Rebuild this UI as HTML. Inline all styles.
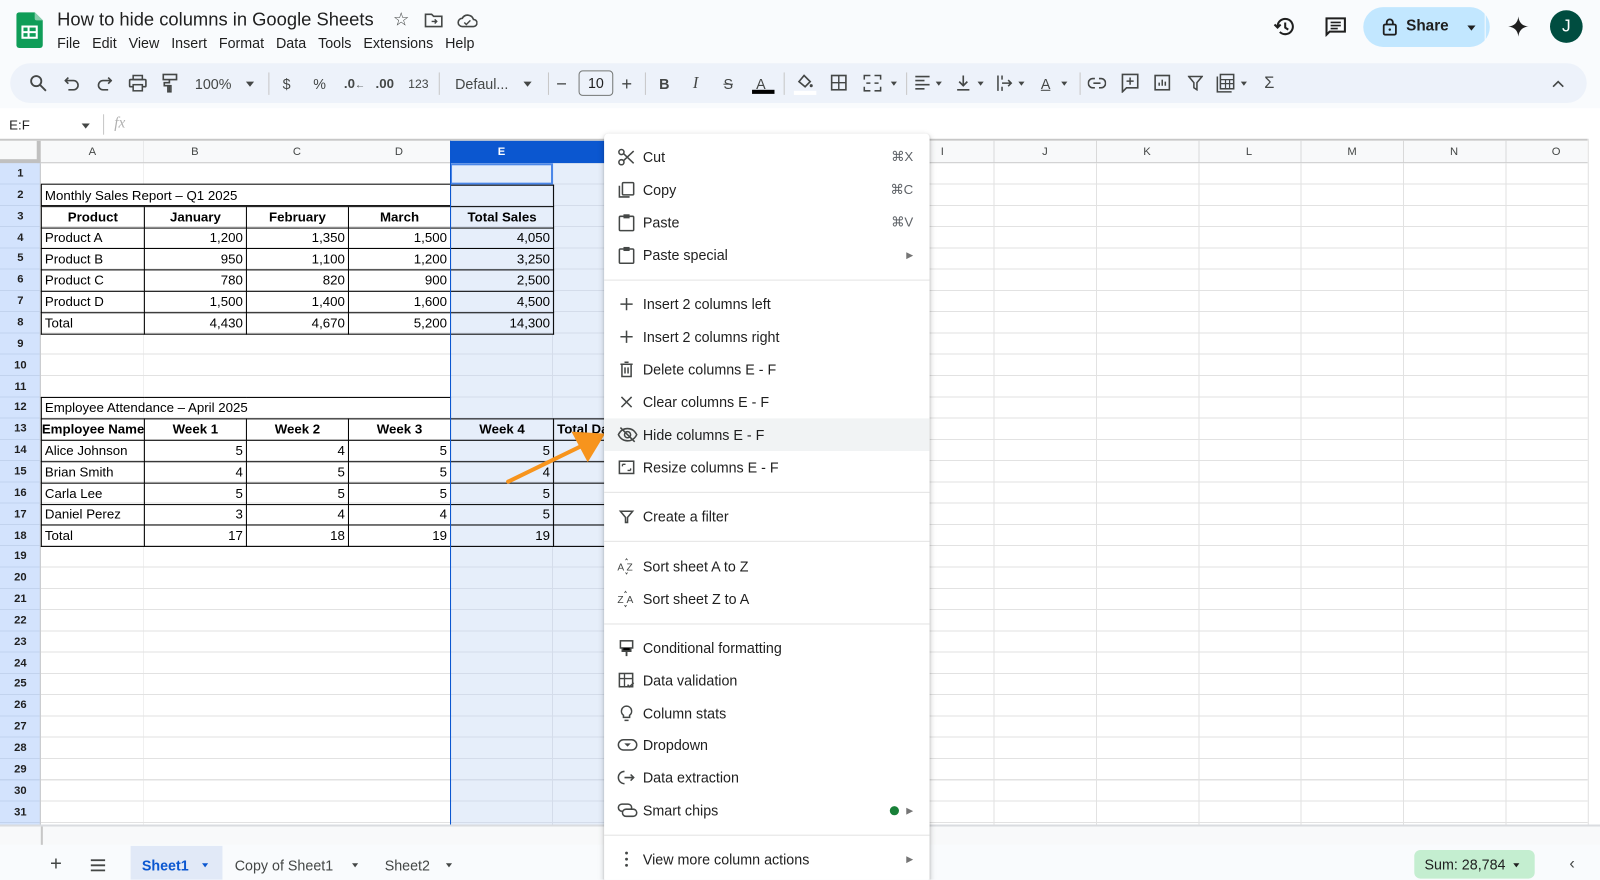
<!DOCTYPE html>
<html><head><meta charset="utf-8">
<style>
*{box-sizing:border-box;margin:0;padding:0}
html,body{width:1600px;height:879px;overflow:hidden;background:#f9fbfd}
#w{position:absolute;left:0;top:0;width:1568px;height:862px;transform:scale(1.020408);transform-origin:0 0;font-family:"Liberation Sans",Arial,sans-serif;color:#1f1f1f;overflow:hidden}
.a{position:absolute}
.tb{position:absolute;top:72px;font-size:14px;color:#444746;line-height:20px}
.sep{position:absolute;top:71px;width:1px;height:22px;background:#c7c7c7}
.ch{position:absolute;top:138px;height:22px;font-size:11px;color:#444746;text-align:center;line-height:22px}
.rh{position:absolute;left:0;width:40px;font-size:11px;font-weight:bold;color:#1f1f1f;text-align:center;line-height:20px}
table.d{position:absolute;border-collapse:collapse;table-layout:fixed;font-size:13px;color:#000}
table.d td{border:1px solid #000;height:20.85px;padding:0 3px;white-space:nowrap;overflow:hidden;line-height:18px}
td.r{text-align:right}td.b{font-weight:bold;text-align:center}
.mi{position:absolute;left:592px;width:319px;height:32px;font-size:14px;color:#1f1f1f;line-height:32px}
.mi span.t{position:absolute;left:38px}
.mi svg{position:absolute;left:13px;top:7px}
.mi .k{position:absolute;right:16px;color:#5f6368;font-size:13px}
.mi .ar{position:absolute;right:16px;font-size:9px;color:#757575}
.ms{position:absolute;left:592px;width:319px;height:1px;background:#e3e3e3}
</style></head><body><div id="w">

<svg class="a" style="left:16px;top:12px" width="26" height="35" viewBox="0 0 26 35"><path d="M0 3a3 3 0 0 1 3-3h15l8 8v24a3 3 0 0 1-3 3H3a3 3 0 0 1-3-3z" fill="#0f9d58"/><path d="M18 0l8 8h-6a2 2 0 0 1-2-2z" fill="#87ceac"/><rect x="6" y="14" width="14" height="11" fill="none" stroke="#fff" stroke-width="2"/><path d="M6 19.5h14M12 14v11" stroke="#fff" stroke-width="2"/></svg>
<div class="a" style="left:56px;top:9px;font-size:18px;color:#1f1f1f">How to hide columns in Google Sheets</div>
<div class="a" style="left:385px;top:9px;font-size:18px;color:#444746">☆</div>
<svg class="a" style="left:416px;top:12px" width="18" height="16" viewBox="0 0 18 16"><path d="M1 2h6l2 2h8v10H1z" fill="none" stroke="#444746" stroke-width="1.6"/><path d="M7 9h5M10 7l2 2-2 2" fill="none" stroke="#444746" stroke-width="1.4"/></svg>
<svg class="a" style="left:448px;top:12px" width="20" height="16" viewBox="0 0 20 16"><path d="M5 14a4 4 0 0 1 0-8 6 6 0 0 1 11 1 3.5 3.5 0 0 1 0 7z" fill="none" stroke="#444746" stroke-width="1.6"/><path d="M7 10l2 2 4-4" fill="none" stroke="#444746" stroke-width="1.4"/></svg>
<div class="a" style="left:56px;top:34px;font-size:14px;color:#1f1f1f">File&nbsp;&nbsp;&nbsp;Edit&nbsp;&nbsp;&nbsp;View&nbsp;&nbsp;&nbsp;Insert&nbsp;&nbsp;&nbsp;Format&nbsp;&nbsp;&nbsp;Data&nbsp;&nbsp;&nbsp;Tools&nbsp;&nbsp;&nbsp;Extensions&nbsp;&nbsp;&nbsp;Help</div>

<svg class="a" style="left:1248px;top:15px" width="22" height="22" viewBox="0 0 22 22"><path d="M4 11a7.5 7.5 0 1 1 2.2 5.3" fill="none" stroke="#1f1f1f" stroke-width="2"/><path d="M1 9l3 3 3-3" fill="none" stroke="#1f1f1f" stroke-width="2"/><path d="M11.5 7v5l3 2" fill="none" stroke="#1f1f1f" stroke-width="2"/></svg>
<svg class="a" style="left:1298px;top:16px" width="22" height="20" viewBox="0 0 22 20"><path d="M2 2h18v13H5l-3 3z" fill="none" stroke="#1f1f1f" stroke-width="2"/><path d="M6 6h10M6 9h10M6 12h7" stroke="#1f1f1f" stroke-width="1.6"/></svg>
<div class="a" style="left:1336px;top:7px;width:124px;height:39px;border-radius:20px;background:#c2e7ff"></div>
<div class="a" style="left:1455px;top:7px;width:1px;height:39px;background:#f9fbfd;left:1455px"></div>
<svg class="a" style="left:1355px;top:17px" width="14" height="18" viewBox="0 0 14 18"><rect x="1" y="7" width="12" height="10" rx="1.5" fill="none" stroke="#1f1f1f" stroke-width="1.8"/><path d="M4 7V5a3 3 0 0 1 6 0v2" fill="none" stroke="#1f1f1f" stroke-width="1.8"/><circle cx="7" cy="12" r="1.2" fill="#1f1f1f"/></svg>
<div class="a" style="left:1378px;top:17px;font-size:15px;font-weight:bold;color:#1f1f1f">Share</div>
<div class="a" style="left:1438px;top:25px;border:4px solid transparent;border-top:5px solid #1f1f1f"></div>
<svg class="a" style="left:1478px;top:16px" width="20" height="20" viewBox="0 0 20 20"><path d="M10 0C10.5 6 14 9.5 20 10 14 10.5 10.5 14 10 20 9.5 14 6 10.5 0 10 6 9.5 9.5 6 10 0z" fill="#1f1f1f"/></svg>
<div class="a" style="left:1519px;top:10px;width:32px;height:32px;border-radius:50%;background:#004d40;color:#fff;font-size:17px;text-align:center;line-height:32px">J</div>

<div class="a" style="left:10px;top:62px;width:1545px;height:39px;border-radius:20px;background:#edf2fa"></div>
<svg class="a" style="left:29px;top:73px" width="17" height="17" viewBox="0 0 17 17"><circle cx="6.5" cy="6.5" r="5" fill="none" stroke="#444746" stroke-width="1.8"/><path d="M10 10l6 6" stroke="#444746" stroke-width="1.8"/></svg>
<svg class="a" style="left:63px;top:75px" width="15" height="14" viewBox="0 0 15 14"><path d="M4 1L1 4l3 3" fill="none" stroke="#444746" stroke-width="1.6"/><path d="M1 4h8a4.5 4.5 0 0 1 0 9H4" fill="none" stroke="#444746" stroke-width="1.6"/></svg>
<svg class="a" style="left:95px;top:75px" width="15" height="14" viewBox="0 0 15 14"><path d="M11 1l3 3-3 3" fill="none" stroke="#444746" stroke-width="1.6"/><path d="M14 4H6a4.5 4.5 0 0 0 0 9h5" fill="none" stroke="#444746" stroke-width="1.6"/></svg>
<svg class="a" style="left:126px;top:73px" width="18" height="17" viewBox="0 0 18 17"><rect x="1" y="5" width="16" height="7" rx="1" fill="none" stroke="#444746" stroke-width="1.6"/><rect x="4.5" y="1" width="9" height="4" fill="none" stroke="#444746" stroke-width="1.5"/><rect x="4.5" y="10" width="9" height="6" fill="#edf2fa" stroke="#444746" stroke-width="1.5"/></svg>
<svg class="a" style="left:159px;top:72px" width="15" height="19" viewBox="0 0 15 19"><rect x="1" y="1" width="13" height="5" fill="none" stroke="#444746" stroke-width="1.6"/><path d="M7 6v3H2v3h5v6" fill="none" stroke="#444746" stroke-width="1.6"/><rect x="5.5" y="12" width="3" height="6" fill="none" stroke="#444746" stroke-width="1.5"/></svg>
<div class="tb" style="left:191px">100%</div>
<div class="a" style="left:241px;top:80px;border:4px solid transparent;border-top:5px solid #444746"></div>
<div class="sep" style="left:263px"></div>
<div class="tb" style="left:277px">$</div>
<div class="tb" style="left:307px">%</div>
<div class="tb" style="left:337px;font-size:13px;font-weight:bold">.0<span style="font-size:10px">←</span></div>
<div class="tb" style="left:368px;font-size:13px;font-weight:bold">.00</div>
<div class="tb" style="left:400px;font-size:12px">123</div>
<div class="sep" style="left:430px"></div>
<div class="tb" style="left:446px">Defaul...</div>
<div class="a" style="left:513px;top:80px;border:4px solid transparent;border-top:5px solid #444746"></div>
<div class="sep" style="left:537px"></div>
<div class="tb" style="left:545px;font-size:18px">−</div>
<div class="a" style="left:567px;top:69px;width:34px;height:25px;border:1px solid #747775;border-radius:4px;font-size:14px;text-align:center;line-height:23px;color:#1f1f1f">10</div>
<div class="tb" style="left:609px;font-size:18px">+</div>
<div class="sep" style="left:632px"></div>
<div class="tb" style="left:646px;font-weight:bold">B</div>
<div class="tb" style="left:679px;font-style:italic;font-family:'Liberation Serif',serif;font-size:16px">I</div>
<div class="tb" style="left:709px;text-decoration:line-through">S</div>
<div class="tb" style="left:741px">A</div><div class="a" style="left:737px;top:88px;width:22px;height:4px;background:#000"></div>
<div class="sep" style="left:768px"></div>
<svg class="a" style="left:779px;top:71px" width="20" height="20" viewBox="0 0 20 20"><path d="M4 9l5-6 6 6-5 5z" fill="none" stroke="#444746" stroke-width="1.6"/><circle cx="16" cy="13" r="1.5" fill="#444746"/></svg>
<div class="a" style="left:778px;top:89px;width:22px;height:4px;background:#fff"></div>
<svg class="a" style="left:814px;top:73px" width="16" height="16" viewBox="0 0 16 16"><rect x="1" y="1" width="14" height="14" fill="none" stroke="#444746" stroke-width="1.6"/><path d="M8 1v14M1 8h14" stroke="#444746" stroke-width="1.4"/></svg>
<svg class="a" style="left:846px;top:73px" width="18" height="17" viewBox="0 0 18 17"><path d="M1 5V1h6M11 1h6v4M1 12v4h6M11 16h6v-4M3 8.5h4M11 8.5h4" fill="none" stroke="#444746" stroke-width="1.5"/></svg>
<div class="a" style="left:873px;top:80px;border:3.5px solid transparent;border-top:4.5px solid #444746"></div>
<div class="sep" style="left:888px"></div>
<svg class="a" style="left:896px;top:74px" width="16" height="15" viewBox="0 0 16 15"><path d="M1 1h14M1 5h9M1 9h14M1 13h9" stroke="#444746" stroke-width="1.6"/></svg>
<div class="a" style="left:917px;top:80px;border:3.5px solid transparent;border-top:4.5px solid #444746"></div>
<svg class="a" style="left:937px;top:73px" width="14" height="17" viewBox="0 0 14 17"><path d="M7 1v10M3 7l4 4 4-4M1 15h12" fill="none" stroke="#444746" stroke-width="1.6"/></svg>
<div class="a" style="left:958px;top:80px;border:3.5px solid transparent;border-top:4.5px solid #444746"></div>
<svg class="a" style="left:977px;top:73px" width="16" height="17" viewBox="0 0 16 17"><path d="M1 1v15M5 8.5h9M11 5.5l3 3-3 3M5 1v4M5 12v4" fill="none" stroke="#444746" stroke-width="1.5"/></svg>
<div class="a" style="left:998px;top:80px;border:3.5px solid transparent;border-top:4.5px solid #444746"></div>
<div class="tb" style="left:1020px;text-decoration:underline">A</div>
<div class="a" style="left:1040px;top:80px;border:3.5px solid transparent;border-top:4.5px solid #444746"></div>
<div class="sep" style="left:1058px"></div>
<svg class="a" style="left:1066px;top:76px" width="18" height="11" viewBox="0 0 18 11"><path d="M7 1H5a4.5 4.5 0 0 0 0 9h2M11 1h2a4.5 4.5 0 0 1 0 9h-2M5.5 5.5h7" fill="none" stroke="#444746" stroke-width="1.6"/></svg>
<svg class="a" style="left:1099px;top:72px" width="17" height="19" viewBox="0 0 17 19"><path d="M1 1h15v13H5l-4 4z" fill="none" stroke="#444746" stroke-width="1.6"/><path d="M8.5 4v7M5 7.5h7" stroke="#444746" stroke-width="1.5"/></svg>
<svg class="a" style="left:1131px;top:73px" width="16" height="16" viewBox="0 0 16 16"><rect x="1" y="1" width="14" height="14" fill="none" stroke="#444746" stroke-width="1.6"/><path d="M5 11V8M8 11V5M11 11V7" stroke="#444746" stroke-width="1.5"/></svg>
<svg class="a" style="left:1164px;top:74px" width="15" height="15" viewBox="0 0 15 15"><path d="M1 1h13L9 7v7l-3-2V7z" fill="none" stroke="#444746" stroke-width="1.5"/></svg>
<svg class="a" style="left:1192px;top:72px" width="18" height="19" viewBox="0 0 18 19"><path d="M1 3v15h14" fill="none" stroke="#444746" stroke-width="1.5"/><rect x="4" y="1" width="13" height="14" fill="none" stroke="#444746" stroke-width="1.5"/><path d="M4 6h13M4 10h13M9 6v9M13 6v9" stroke="#444746" stroke-width="1.2"/></svg>
<div class="a" style="left:1216px;top:80px;border:3.5px solid transparent;border-top:4.5px solid #444746"></div>
<div class="tb" style="left:1239px;font-size:16px">Σ</div>
<svg class="a" style="left:1521px;top:78px" width="12" height="8" viewBox="0 0 12 8"><path d="M1 7l5-5 5 5" fill="none" stroke="#444746" stroke-width="1.6"/></svg>

<div class="a" style="left:0;top:106px;width:1600px;height:32px;background:#fff"></div>
<div class="a" style="left:9px;top:115px;font-size:13px;color:#1f1f1f">E:F</div>
<div class="a" style="left:80px;top:121px;border:4px solid transparent;border-top:5px solid #444746"></div>
<div class="a" style="left:101px;top:112px;width:1px;height:20px;background:#c7c7c7"></div>
<div class="a" style="left:112px;top:113px;font-size:15px;font-style:italic;color:#b0b0b0;font-family:'Liberation Serif',serif">fx</div>

<div class="a" style="left:0;top:136px;width:1556px;height:672px;background:#fff"></div>
<div class="a" style="left:0;top:136px;width:1556px;height:2px;background:#c7c7c7"></div>
<div class="a" style="left:0;top:138px;width:40px;height:22px;background:#f8f9fa;border-right:4px solid #c0c0c0;border-bottom:4px solid #c0c0c0"></div>
<div class="a" style="left:40px;top:138px;width:1516px;height:22px;background:#f8f9fa repeating-linear-gradient(90deg,transparent 0,transparent 100px,#d9d9d9 100px,#d9d9d9 100.4px);border-bottom:1px solid #c7c7c7"></div>
<div class="a" style="left:441px;top:138px;width:201px;height:22px;background:#0b57d0"></div>
<div class="a" style="left:911px;top:138px;width:645px;height:22px;background:#f8f9fa repeating-linear-gradient(90deg,transparent 0,transparent 62.5px,#d9d9d9 62.5px,#d9d9d9 63.5px,transparent 63.5px,transparent 100.4px);border-bottom:1px solid #c7c7c7"></div>
<div class="ch" style="left:40px;width:101px">A</div>
<div class="ch" style="left:141px;width:100px">B</div>
<div class="ch" style="left:241px;width:100px">C</div>
<div class="ch" style="left:341px;width:100px">D</div>
<div class="ch" style="left:441px;width:101px;color:#fff;font-weight:bold">E</div>
<div class="ch" style="left:873px;width:101px">I</div>
<div class="ch" style="left:974px;width:100px">J</div>
<div class="ch" style="left:1074px;width:100px">K</div>
<div class="ch" style="left:1174px;width:100px">L</div>
<div class="ch" style="left:1275px;width:100px">M</div>
<div class="ch" style="left:1375px;width:100px">N</div>
<div class="ch" style="left:1475px;width:100px">O</div>

<div class="a" style="left:40px;top:160px;width:1516px;height:648px;background-image:repeating-linear-gradient(180deg,transparent 0,transparent 19.85px,#e2e2e2 19.85px,#e2e2e2 20.85px),repeating-linear-gradient(90deg,transparent 0,transparent 100px,#e2e2e2 100px,#e2e2e2 100.4px)"></div>
<div class="a" style="left:441px;top:160px;width:201px;height:648px;background-color:rgba(11,87,208,0.1);background-image:repeating-linear-gradient(180deg,transparent 0,transparent 19.85px,#d4dcea 19.85px,#d4dcea 20.85px),linear-gradient(90deg,transparent 100px,#d4dcea 100px,#d4dcea 101px,transparent 101px)"></div>
<div class="a" style="left:441px;top:138px;width:1px;height:670px;background:#0b57d0"></div>
<div class="a" style="left:441px;top:160px;width:101px;height:21px;border:2px solid #4a86e8"></div>
<div class="a" style="left:911px;top:160px;width:645px;height:648px;background:#fff;background-image:repeating-linear-gradient(180deg,transparent 0,transparent 19.85px,#e2e2e2 19.85px,#e2e2e2 20.85px),repeating-linear-gradient(90deg,transparent 0,transparent 62.5px,#e2e2e2 62.5px,#e2e2e2 63.5px,transparent 63.5px,transparent 100.4px)"></div>
<div class="a" style="left:0;top:160px;width:40px;height:648px;background:#d3e3fd repeating-linear-gradient(180deg,transparent 0,transparent 19.85px,#c2d3ee 19.85px,#c2d3ee 20.85px);border-right:1px solid #c7c7c7"></div>
<div class="rh" style="top:160.0px">1</div><div class="rh" style="top:180.9px">2</div><div class="rh" style="top:201.7px">3</div><div class="rh" style="top:222.6px">4</div><div class="rh" style="top:243.4px">5</div><div class="rh" style="top:264.3px">6</div><div class="rh" style="top:285.1px">7</div><div class="rh" style="top:306.0px">8</div><div class="rh" style="top:326.8px">9</div><div class="rh" style="top:347.7px">10</div><div class="rh" style="top:368.5px">11</div><div class="rh" style="top:389.4px">12</div><div class="rh" style="top:410.2px">13</div><div class="rh" style="top:431.1px">14</div><div class="rh" style="top:451.9px">15</div><div class="rh" style="top:472.8px">16</div><div class="rh" style="top:493.6px">17</div><div class="rh" style="top:514.5px">18</div><div class="rh" style="top:535.3px">19</div><div class="rh" style="top:556.2px">20</div><div class="rh" style="top:577.0px">21</div><div class="rh" style="top:597.9px">22</div><div class="rh" style="top:618.7px">23</div><div class="rh" style="top:639.6px">24</div><div class="rh" style="top:660.4px">25</div><div class="rh" style="top:681.3px">26</div><div class="rh" style="top:702.1px">27</div><div class="rh" style="top:723.0px">28</div><div class="rh" style="top:743.8px">29</div><div class="rh" style="top:764.7px">30</div><div class="rh" style="top:785.5px">31</div>

<table class="d" style="left:40px;top:180.85px;width:502px">
<colgroup><col style="width:101px"><col style="width:100px"><col style="width:100px"><col style="width:100px"><col style="width:101px"></colgroup>
<tr><td colspan="4">Monthly Sales Report – Q1 2025</td><td style="background:transparent"></td></tr>
<tr><td class="b">Product</td><td class="b">January</td><td class="b">February</td><td class="b">March</td><td class="b">Total Sales</td></tr>
<tr><td>Product A</td><td class="r">1,200</td><td class="r">1,350</td><td class="r">1,500</td><td class="r">4,050</td></tr>
<tr><td>Product B</td><td class="r">950</td><td class="r">1,100</td><td class="r">1,200</td><td class="r">3,250</td></tr>
<tr><td>Product C</td><td class="r">780</td><td class="r">820</td><td class="r">900</td><td class="r">2,500</td></tr>
<tr><td>Product D</td><td class="r">1,500</td><td class="r">1,400</td><td class="r">1,600</td><td class="r">4,500</td></tr>
<tr><td>Total</td><td class="r">4,430</td><td class="r">4,670</td><td class="r">5,200</td><td class="r">14,300</td></tr>
</table>
<div class="a" style="left:40px;top:180px;width:402px;height:22px;background:#fff;border:1px solid #000;font-size:13px;padding:2px 3px;color:#000;line-height:18px">Monthly Sales Report – Q1 2025</div>

<table class="d" style="left:40px;top:389.35px;width:602px">
<colgroup><col style="width:101px"><col style="width:100px"><col style="width:100px"><col style="width:100px"><col style="width:101px"><col style="width:100px"></colgroup>
<tr><td colspan="4">Employee Attendance – April 2025</td><td style="border:none"></td><td style="border:none"></td></tr>
<tr><td style="font-weight:bold;padding:0">Employee Name</td><td class="b">Week 1</td><td class="b">Week 2</td><td class="b">Week 3</td><td class="b">Week 4</td><td class="b" style="text-align:left">Total Days</td></tr>
<tr><td>Alice Johnson</td><td class="r">5</td><td class="r">4</td><td class="r">5</td><td class="r">5</td><td></td></tr>
<tr><td>Brian Smith</td><td class="r">4</td><td class="r">5</td><td class="r">5</td><td class="r">4</td><td></td></tr>
<tr><td>Carla Lee</td><td class="r">5</td><td class="r">5</td><td class="r">5</td><td class="r">5</td><td></td></tr>
<tr><td>Daniel Perez</td><td class="r">3</td><td class="r">4</td><td class="r">4</td><td class="r">5</td><td></td></tr>
<tr><td>Total</td><td class="r">17</td><td class="r">18</td><td class="r">19</td><td class="r">19</td><td></td></tr>
</table>
<div class="a" style="left:441px;top:160px;width:1px;height:648px;background:#0b57d0"></div>

<svg class="a" style="left:490px;top:415px" width="110" height="65" viewBox="0 0 110 65"><path d="M8 57L80 22" stroke="#f7941d" stroke-width="4" stroke-linecap="round"/><path d="M103 10L70 8 86 38z" fill="#f7941d"/></svg>

<div class="a" style="left:1556px;top:136px;width:12px;height:690px;background:#fff;border-left:1px solid #e0e0e0"></div>
<div class="a" style="left:0;top:808px;width:1568px;height:20px;background:#f8f9fa;border-top:2px solid #dadce0"></div>
<div class="a" style="left:40px;top:810px;width:2px;height:18px;background:#c7c7c7"></div>
<div class="a" style="left:0;top:828px;width:1600px;height:51px;background:#f9fbfd"></div>
<div class="a" style="left:49px;top:836px;font-size:20px;color:#444746">+</div>
<svg class="a" style="left:88px;top:842px" width="16" height="12" viewBox="0 0 16 12"><path d="M1 1h14M1 6h14M1 11h14" stroke="#444746" stroke-width="1.8"/></svg>
<div class="a" style="left:128px;top:829px;width:90px;height:50px;background:#e1e9f7"></div>
<div class="a" style="left:139px;top:840px;font-size:14px;color:#0b57d0;font-weight:bold">Sheet1</div>
<div class="a" style="left:198px;top:846px;border:3.5px solid transparent;border-top:4.5px solid #0b57d0"></div>
<div class="a" style="left:230px;top:840px;font-size:14px;color:#444746">Copy of Sheet1</div>
<div class="a" style="left:345px;top:846px;border:3.5px solid transparent;border-top:4.5px solid #444746"></div>
<div class="a" style="left:377px;top:840px;font-size:14px;color:#444746">Sheet2</div>
<div class="a" style="left:437px;top:846px;border:3.5px solid transparent;border-top:4.5px solid #444746"></div>
<div class="a" style="left:1386px;top:833px;width:118px;height:28px;border-radius:6px;background:#c4eed0"></div>
<div class="a" style="left:1396px;top:839px;font-size:14px;color:#1f1f1f">Sum: 28,784</div>
<div class="a" style="left:1483px;top:846px;border:3.5px solid transparent;border-top:4.5px solid #1f1f1f"></div>
<div class="a" style="left:1538px;top:838px;font-size:16px;color:#444746">‹</div>

<div class="a" style="left:592px;top:131px;width:319px;height:760px;background:#fff;border-radius:4px;box-shadow:0 2px 6px rgba(0,0,0,.2),0 1px 2px rgba(0,0,0,.15)"></div>
<div class="a" style="left:592px;top:410px;width:319px;height:32px;background:#f1f3f4"></div>

<div class="mi" style="top:138px"><svg width="18" height="18" viewBox="0 0 18 18"><circle cx="4" cy="4" r="2.5" fill="none" stroke="#444746" stroke-width="1.5"/><circle cx="4" cy="14" r="2.5" fill="none" stroke="#444746" stroke-width="1.5"/><path d="M6 5.5L16 15M6 12.5L16 3" stroke="#444746" stroke-width="1.5"/></svg><span class="t">Cut</span><span class="k">⌘X</span></div>
<div class="mi" style="top:170px"><svg width="18" height="18" viewBox="0 0 18 18"><rect x="5" y="2" width="11" height="12" rx="1" fill="none" stroke="#444746" stroke-width="1.5"/><path d="M2 5v11h10" fill="none" stroke="#444746" stroke-width="1.5"/></svg><span class="t">Copy</span><span class="k">⌘C</span></div>
<div class="mi" style="top:202px"><svg width="18" height="18" viewBox="0 0 18 18"><rect x="2" y="3" width="14" height="14" rx="1" fill="none" stroke="#444746" stroke-width="1.5"/><rect x="6" y="1" width="6" height="4" fill="#444746"/></svg><span class="t">Paste</span><span class="k">⌘V</span></div>
<div class="mi" style="top:234px"><svg width="18" height="18" viewBox="0 0 18 18"><rect x="2" y="3" width="14" height="14" rx="1" fill="none" stroke="#444746" stroke-width="1.5"/><rect x="6" y="1" width="6" height="4" fill="#444746"/></svg><span class="t">Paste special</span><span class="ar">▶</span></div>
<div class="ms" style="top:274px"></div>
<div class="mi" style="top:282px"><svg width="18" height="18" viewBox="0 0 18 18"><path d="M9 3v12M3 9h12" stroke="#444746" stroke-width="1.5"/></svg><span class="t">Insert 2 columns left</span></div>
<div class="mi" style="top:314px"><svg width="18" height="18" viewBox="0 0 18 18"><path d="M9 3v12M3 9h12" stroke="#444746" stroke-width="1.5"/></svg><span class="t">Insert 2 columns right</span></div>
<div class="mi" style="top:346px"><svg width="18" height="18" viewBox="0 0 18 18"><path d="M3 4h12M7 2h4M4.5 4v12h9V4M7.5 7v6M10.5 7v6" fill="none" stroke="#444746" stroke-width="1.5"/></svg><span class="t">Delete columns E - F</span></div>
<div class="mi" style="top:378px"><svg width="18" height="18" viewBox="0 0 18 18"><path d="M4 4l10 10M14 4L4 14" stroke="#444746" stroke-width="1.5"/></svg><span class="t">Clear columns E - F</span></div>
<div class="mi" style="top:410px"><svg width="20" height="18" viewBox="0 0 20 18"><path d="M1 9c2-4 5-6 9-6s7 2 9 6c-2 4-5 6-9 6s-7-2-9-6z" fill="none" stroke="#444746" stroke-width="1.5"/><circle cx="10" cy="9" r="3" fill="none" stroke="#444746" stroke-width="1.5"/><path d="M3 2l14 14" stroke="#444746" stroke-width="1.5"/></svg><span class="t">Hide columns E - F</span></div>
<div class="mi" style="top:442px"><svg width="18" height="18" viewBox="0 0 18 18"><rect x="2" y="3" width="14" height="12" fill="none" stroke="#444746" stroke-width="1.5"/><path d="M5 6h3M5 6v2M13 12h-3M13 12v-2" stroke="#444746" stroke-width="1.3"/></svg><span class="t">Resize columns E - F</span></div>
<div class="ms" style="top:482px"></div>
<div class="mi" style="top:490px"><svg width="18" height="18" viewBox="0 0 18 18"><path d="M3 4h12l-5 6v5H8v-5z" fill="none" stroke="#444746" stroke-width="1.5"/></svg><span class="t">Create a filter</span></div>
<div class="ms" style="top:530px"></div>
<div class="mi" style="top:539px"><svg width="18" height="18" viewBox="0 0 18 18"><text x="0" y="13" font-size="10" font-family="Liberation Sans" fill="#444746">A</text><text x="9" y="13" font-size="10" font-family="Liberation Sans" fill="#444746">Z</text><path d="M8 3l1-1.5 1 1.5M8 15l1 1.5 1-1.5" fill="none" stroke="#444746" stroke-width="0.8"/></svg><span class="t">Sort sheet A to Z</span></div>
<div class="mi" style="top:571px"><svg width="18" height="18" viewBox="0 0 18 18"><text x="0" y="13" font-size="10" font-family="Liberation Sans" fill="#444746">Z</text><text x="9" y="13" font-size="10" font-family="Liberation Sans" fill="#444746">A</text><path d="M7 3l1-1.5 1 1.5M7 15l1 1.5 1-1.5" fill="none" stroke="#444746" stroke-width="0.8"/></svg><span class="t">Sort sheet Z to A</span></div>
<div class="ms" style="top:611px"></div>
<div class="mi" style="top:619px"><svg width="18" height="18" viewBox="0 0 18 18"><rect x="3" y="2" width="12" height="7" fill="none" stroke="#444746" stroke-width="1.5"/><path d="M5 9v3h8V9M9 12v5" stroke="#444746" stroke-width="1.8"/></svg><span class="t">Conditional formatting</span></div>
<div class="mi" style="top:651px"><svg width="18" height="18" viewBox="0 0 18 18"><rect x="2" y="2" width="13" height="13" fill="none" stroke="#444746" stroke-width="1.5"/><path d="M2 7h13M7 2v13" stroke="#444746" stroke-width="1.3"/><path d="M10 13l2 2 4-4" fill="#fff" stroke="#444746" stroke-width="1.5"/></svg><span class="t">Data validation</span></div>
<div class="mi" style="top:683px"><svg width="18" height="18" viewBox="0 0 18 18"><path d="M9 2a5 5 0 0 0-3 9v2h6v-2a5 5 0 0 0-3-9zM7 16h4" fill="none" stroke="#444746" stroke-width="1.5"/></svg><span class="t">Column stats</span></div>
<div class="mi" style="top:714px"><svg width="20" height="18" viewBox="0 0 20 18"><rect x="1" y="4" width="18" height="10" rx="5" fill="none" stroke="#444746" stroke-width="1.5"/><path d="M8 8l2 2 2-2z" fill="#444746" stroke="#444746"/></svg><span class="t">Dropdown</span></div>
<div class="mi" style="top:746px"><svg width="18" height="18" viewBox="0 0 18 18"><path d="M7 3a6 6 0 0 0 0 12M7 9h9M13 6l3 3-3 3" fill="none" stroke="#444746" stroke-width="1.5"/></svg><span class="t">Data extraction</span></div>
<div class="mi" style="top:778px"><svg width="20" height="18" viewBox="0 0 20 18"><rect x="1" y="3" width="13" height="7" rx="3.5" fill="none" stroke="#444746" stroke-width="1.5"/><rect x="5" y="8" width="14" height="7" rx="3.5" fill="#fff" stroke="#444746" stroke-width="1.5"/></svg><span class="t">Smart chips</span><span style="position:absolute;left:280px;top:12px;width:9px;height:9px;border-radius:50%;background:#188038"></span><span class="ar">▶</span></div>
<div class="ms" style="top:818px"></div>
<div class="mi" style="top:826px"><svg width="18" height="18" viewBox="0 0 18 18"><circle cx="9" cy="3" r="1.4" fill="#444746"/><circle cx="9" cy="9" r="1.4" fill="#444746"/><circle cx="9" cy="15" r="1.4" fill="#444746"/></svg><span class="t">View more column actions</span><span class="ar">▶</span></div>
</div></body></html>
